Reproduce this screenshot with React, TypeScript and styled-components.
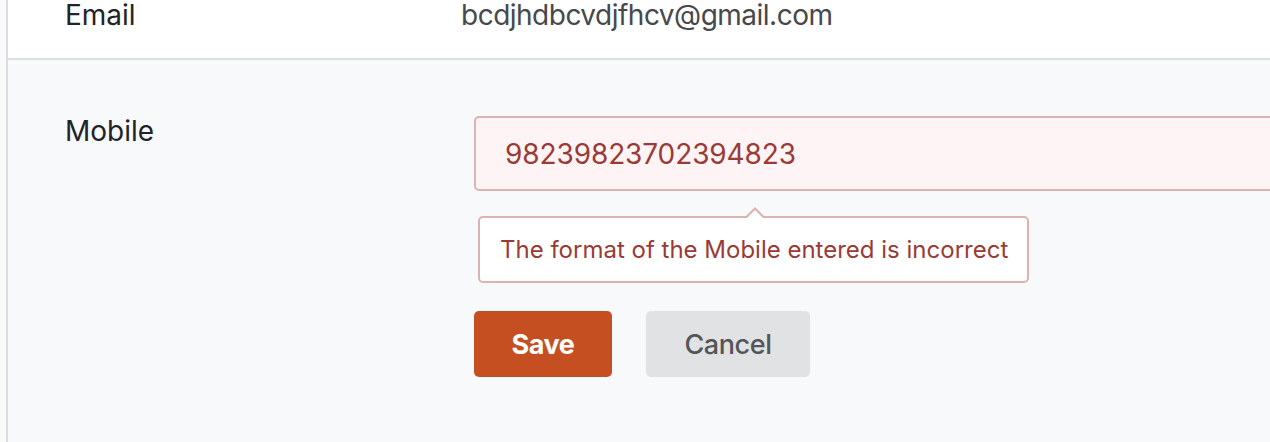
import React from 'react';
import styled, { createGlobalStyle } from 'styled-components';

const GlobalStyle = createGlobalStyle`
    html, body {
        margin: 0;
        padding: 0;
        background: #fafafa;
        overflow: hidden;
    }
    body {
        font-family: Inter, "Noto Sans", "Liberation Sans", sans-serif;
    }
`

const Page = styled.div`
    display: flex;
    width: 1270px;
    height: 442px;
    padding-left: 6px;
    box-sizing: border-box;
    overflow: hidden;
`

const Panel = styled.div`
    flex: 1;
    display: flex;
    flex-direction: column;
    border-left: 2px solid #dcdde0;
`

const ReadRow = styled.div`
    display: flex;
    height: 56px;
    background: #ffffff;
    border-bottom: 2px solid #dcdde0;
    padding: 2px 0 0 57px;
    flex-shrink: 0;
`

const EditSection = styled.div`
    flex: 1;
    display: flex;
    background: #f8f9fb;
    padding: 56px 0 0 57px;
`

const Label = styled.div<{ $width: number }>`
    width: ${(p) => p.$width}px;
    flex-shrink: 0;
    font-size: 28px;
    line-height: 30px;
    color: #222326;
`

const ReadLabel = styled(Label)`
    line-height: 26px;
`

const Value = styled.div`
    font-size: 28px;
    line-height: 26px;
    letter-spacing: -0.5px;
    color: #47484b;
`

const Field = styled.div`
    display: flex;
    flex-direction: column;
    align-items: flex-start;
`

const Input = styled.input`
    width: 840px;
    height: 75px;
    box-sizing: border-box;
    border: 2px solid #dbb3b3;
    border-radius: 5px;
    background: #fff4f5;
    padding: 0 0 0 29px;
    font-family: inherit;
    font-size: 28px;
    letter-spacing: -0.1px;
    color: #9a3a35;
    outline: none;
`

const Tooltip = styled.div`
    position: relative;
    margin: 25px 0 0 4px;
    width: 551px;
    height: 67px;
    box-sizing: border-box;
    display: flex;
    align-items: center;
    padding-left: 20px;
    background: #ffffff;
    border: 2px solid #dbb3b3;
    border-radius: 5px;
    font-size: 24px;
    color: #9a3a35;

    &::before,
    &::after {
        content: '';
        position: absolute;
        left: 265px;
        width: 0;
        height: 0;
        border-left: 10px solid transparent;
        border-right: 10px solid transparent;
    }
    &::before {
        top: -11px;
        border-bottom: 10px solid #dbb3b3;
    }
    &::after {
        top: -8px;
        border-bottom: 10px solid #ffffff;
    }
`

const Actions = styled.div`
    display: flex;
    gap: 34px;
    margin-top: 28px;
`

const Button = styled.button<{ $primary?: boolean }>`
    width: ${(p) => (p.$primary ? 138 : 164)}px;
    height: 66px;
    padding: 0;
    border: none;
    border-radius: 5px;
    font-family: inherit;
    font-size: 27px;
    letter-spacing: -0.4px;
    font-weight: ${(p) => (p.$primary ? 700 : 500)};
    background: ${(p) => (p.$primary ? '#c64f21' : '#e1e2e4')};
    color: ${(p) => (p.$primary ? '#ffffff' : '#545558')};
    cursor: pointer;
`

export default function App() {
    return (
        <>
            <GlobalStyle />
            <Page>
                <Panel>
                    <ReadRow>
                        <ReadLabel $width={396}>Email</ReadLabel>
                        <Value>bcdjhdbcvdjfhcv@gmail.com</Value>
                    </ReadRow>
                    <EditSection>
                        <Label $width={409}>Mobile</Label>
                        <Field>
                            <Input defaultValue="98239823702394823" />
                            <Tooltip>The format of the Mobile entered is incorrect</Tooltip>
                            <Actions>
                                <Button $primary>Save</Button>
                                <Button>Cancel</Button>
                            </Actions>
                        </Field>
                    </EditSection>
                </Panel>
            </Page>
        </>
    );
}
